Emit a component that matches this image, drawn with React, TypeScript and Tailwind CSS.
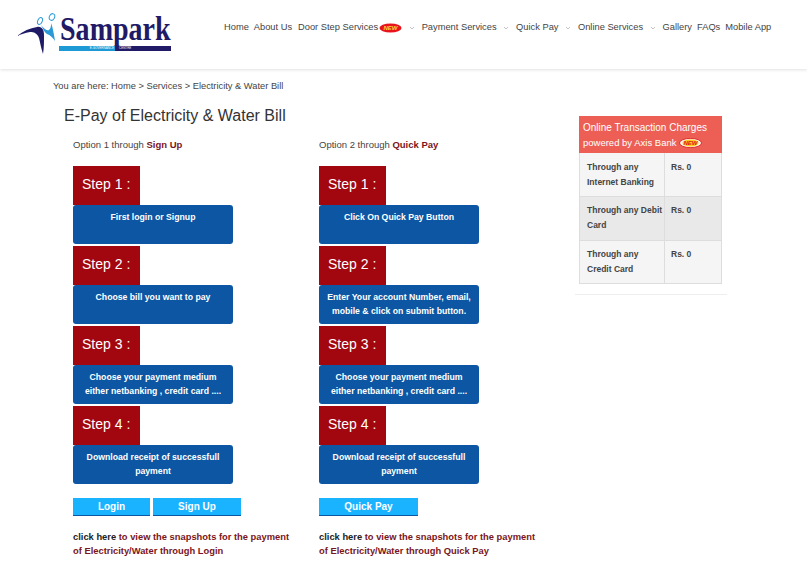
const sans = { fontFamily: '"Liberation Sans", Arial, sans-serif' };

function NewBadge({ light = false }: { light?: boolean }) {
  return (
    <svg width="23" height="10" viewBox="0 0 23 10" className="inline-block">
      <ellipse cx="11.5" cy="5" rx="11" ry="4.6" fill={light ? '#fff4e8' : '#e8141c'} stroke={light ? '#d8141c' : 'none'} strokeWidth="0.8" />
      {light && <ellipse cx="11.5" cy="5" rx="8" ry="3.4" fill="#ffc81e" />}
      <text x="11.5" y="7.2" textAnchor="middle" fontSize="6" fontWeight="700" fontStyle="italic" fill={light ? '#d8141c' : '#ffd83a'} fontFamily='"Liberation Sans", sans-serif'>NEW</text>
    </svg>
  );
}

function Caret() {
  return (
    <svg width="6" height="4" viewBox="0 0 6 4" className="mx-[6.75px] mt-[1px]">
      <path d="M1 1l2 2 2-2" fill="none" stroke="#c4c4c4" strokeWidth="1" />
    </svg>
  );
}

function Logo() {
  return (
    <div className="relative w-[160px] h-[44px] shrink-0">
      <svg width="48" height="46" viewBox="0 0 48 46" className="absolute left-0 top-0">
        <path d="M2 23C8 18 15 15 22 14C27 13 29 17 29 22C29 29 29 35 28 41C26 35 25 29 24 25C22 20 19 19 15 19C10 20 6 21 2 23Z" fill="#1f1a66" />
        <path d="M26 12C29 16 32 18 34 17C36 15 36 13 36 10C38 15 39 22 40 28C38 25 35 22 32 21C30 20 28 16 26 12Z" fill="#2a9ad6" />
        <ellipse cx="25" cy="8" rx="2.2" ry="3.6" fill="none" stroke="#2a9ad6" strokeWidth="1" transform="rotate(25 25 8)" />
        <ellipse cx="37" cy="4" rx="2.6" ry="3.4" fill="none" stroke="#2a9ad6" strokeWidth="1" transform="rotate(25 37 4)" />
      </svg>
      <div className="absolute left-[45px] top-[-2px] text-[#211a66] font-bold text-[33px] leading-[36px]" style={{ fontFamily: '"Liberation Serif", serif', transform: 'scaleX(0.85)', transformOrigin: 'left' }}>
        Sampark
      </div>
      <div className="absolute left-[44px] top-[33px] w-[112px] h-[5px] flex">
        <div className="w-[56px] bg-[#1d9ad6] text-white text-[3px] leading-[5px] text-right pr-[1px]" style={sans}>E-GOVERNANCE</div>
        <div className="flex-1 bg-[#211a66] text-white text-[3px] leading-[5px] pl-[4px]" style={sans}>CENTRE</div>
      </div>
    </div>
  );
}

function Nav() {
  return (
    <nav className="flex items-center text-[9.3px] text-[#444] whitespace-nowrap h-[14px] mt-[-14px]">
      <span>Home</span>
      <span className="ml-[5px]">About Us</span>
      <span className="ml-[6px]">Door Step Services</span>
      <span className="ml-[1px] flex"><NewBadge /></span>
      <Caret />
      <span>Payment Services</span>
      <Caret />
      <span>Quick Pay</span>
      <Caret />
      <span>Online Services</span>
      <Caret />
      <span>Gallery</span>
      <span className="ml-[5px]">FAQs</span>
      <span className="ml-[5px]">Mobile App</span>
    </nav>
  );
}

function StepBlock({ n, lines }: { n: number; lines: string[] }) {
  return (
    <div className="mb-[2px]">
      <div className="w-[67px] h-[39px] bg-[#a2070f] text-white text-[14px] leading-[37px] pl-[9px]">Step {n} :</div>
      <div className="w-[160px] h-[39px] bg-[#0c56a3] rounded-[3px] text-white text-[8.7px] font-bold leading-[14px] text-center pt-[5px] whitespace-nowrap">
        {lines.map((l) => <div key={l}>{l}</div>)}
      </div>
    </div>
  );
}

function Cta({ w, label }: { w: string; label: string }) {
  return (
    <div className={`${w} h-[18px] bg-[#19b3ff] border-b border-[#0c56a3] text-white text-[10px] font-bold leading-[17px] text-center`}>{label}</div>
  );
}

function Option({ title, cta, steps, buttons, tail, w }: { title: string; cta: string; steps: string[][]; buttons: React.ReactNode; tail: string; w: string }) {
  return (
    <div className={`${w} shrink-0`}>
      <div className="text-[9.5px] leading-[14px] text-[#444]">
        {title} <b className="text-[#7a1420]">{cta}</b>
      </div>
      <div className="mt-[14px]">
        {steps.map((s, i) => <StepBlock key={i} n={i + 1} lines={s} />)}
      </div>
      <div className="mt-[14px] flex gap-[3px]">{buttons}</div>
      <div className="mt-[14px] text-[9.35px] font-bold leading-[14px] text-[#7a1420] whitespace-nowrap">
        <span className="text-[#222]">click here</span> to view the snapshots for the payment<br />
        of Electricity/Water through {tail}
      </div>
    </div>
  );
}

function Row({ a, b, bg, h, pt }: { a: string; b: string; bg: string; h: string; pt: string }) {
  return (
    <div className={`flex ${h} border-b border-[#ddd] ${bg}`}>
      <div className={`w-[85px] border-r border-[#ddd] pl-[7px] ${pt} text-[8.5px] font-bold leading-[14.5px] text-[#444]`}>{a}</div>
      <div className={`flex-1 pl-[6px] ${pt} text-[8.5px] font-bold leading-[14.5px] text-[#444]`}>{b}</div>
    </div>
  );
}

export default function App() {
  return (
    <div className="w-[807px] h-[588px] bg-white overflow-hidden" style={sans}>
      <header className="h-[69px] flex items-center pl-[15px] shadow-[0_1px_3px_rgba(0,0,0,0.12)]">
        <Logo />
        <div className="ml-[49px]"><Nav /></div>
      </header>

      <div className="pl-[53px] pt-[10px] text-[9.3px] leading-[14px] text-[#444]">
        You are here: Home &gt; Services &gt; Electricity &amp; Water Bill
      </div>

      <div className="flex">
        <main className="w-[560px] shrink-0">
          <h1 className="pl-[64px] mt-[13px] text-[16px] leading-[20px] text-[#333]">E-Pay of Electricity &amp; Water Bill</h1>
          <div className="flex pl-[73px] mt-[12px]">
            <Option
              w="w-[246px]"
              title="Option 1 through"
              cta="Sign Up"
              tail="Login"
              steps={[
                ['First login or Signup'],
                ['Choose bill you want to pay'],
                ['Choose your payment medium', 'either netbanking , credit card ....'],
                ['Download receipt of successfull', 'payment'],
              ]}
              buttons={<><Cta w="w-[77px]" label="Login" /><Cta w="w-[88px]" label="Sign Up" /></>}
            />
            <Option
              w="w-[240px]"
              title="Option 2 through"
              cta="Quick Pay"
              tail="Quick Pay"
              steps={[
                ['Click On Quick Pay Button'],
                ['Enter Your account Number, email,', 'mobile & click on submit button.'],
                ['Choose your payment medium', 'either netbanking , credit card ....'],
                ['Download receipt of successfull', 'payment'],
              ]}
              buttons={<Cta w="w-[99px]" label="Quick Pay" />}
            />
          </div>
        </main>

        <aside className="ml-[15px] mt-[23px] w-[152px]">
          <div className="ml-[4px] w-[143px]">
            <div className="h-[37px] bg-[#ed5f55] text-white text-[10px] leading-[15px] pl-[4px] pt-[4px]">
              Online Transaction Charges<br />
              <span className="inline-flex items-center gap-[3px] text-[9.5px]">powered by Axis Bank <NewBadge light /></span>
            </div>
            <div className="border-x border-[#ddd]">
              <Row a="Through any Internet Banking" b="Rs. 0" bg="bg-[#f5f5f5]" h="h-[44px]" pt="pt-[7px]" />
              <Row a="Through any Debit Card" b="Rs. 0" bg="bg-[#e9e9e9]" h="h-[44px]" pt="pt-[6px]" />
              <Row a="Through any Credit Card" b="Rs. 0" bg="bg-[#f5f5f5]" h="h-[43px]" pt="pt-[6px]" />
            </div>
          </div>
          <div className="mt-[10px] border-t border-[#eee]" />
        </aside>
      </div>
    </div>
  );
}
